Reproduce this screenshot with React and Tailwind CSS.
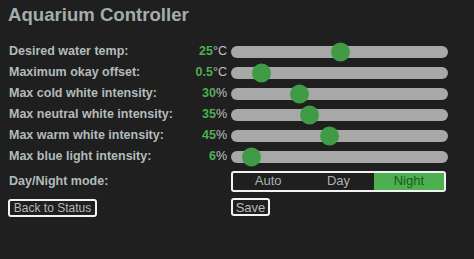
import React from "react";

const rows = [
  { label: "Desired water temp:", num: "25", unit: "°C", x: 340 },
  { label: "Maximum okay offset:", num: "0.5", unit: "°C", x: 261 },
  { label: "Max cold white intensity:", num: "30", unit: "%", x: 299 },
  { label: "Max neutral white intensity:", num: "35", unit: "%", x: 309 },
  { label: "Max warm white intensity:", num: "45", unit: "%", x: 329 },
  { label: "Max blue light intensity:", num: "6", unit: "%", x: 251 },
];

function Slider({ x }) {
  const left = x - 231 - 9.5;
  return (
    <div className="relative w-[217px] h-[12px] rounded-full bg-[#a8a8a8]">
      <div
        className="absolute top-1/2 -translate-y-1/2 w-[19px] h-[19px] rounded-full bg-[#3f9b46]"
        style={{ left: `${left}px` }}
      />
    </div>
  );
}

export default function App() {
  return (
    <div
      className="w-[474px] h-[259px] bg-[#1f1f1f] overflow-hidden"
      style={{ fontFamily: '"Liberation Sans", Arial, sans-serif' }}
    >
      <h1 className="pl-[8px] pt-[4px] text-[18.6px] leading-[22px] font-bold text-[#a3adad]">
        Aquarium Controller
      </h1>
      <div className="pt-[15px] flex flex-col">
        {rows.map((r) => (
          <div key={r.label} className="flex items-center h-[21px]">
            <div className="w-[160px] pl-[9px] text-[12.5px] font-bold text-[#b3bbbb] whitespace-nowrap">
              {r.label}
            </div>
            <div className="w-[67px] text-right text-[12.5px] whitespace-nowrap">
              <span className="font-bold text-[#4caf50]">{r.num}</span>
              <span className="text-[#c2c2c2]">{r.unit}</span>
            </div>
            <div className="ml-[4px]">
              <Slider x={r.x} />
            </div>
          </div>
        ))}
        <div className="flex items-center h-[22px] mt-[3px]">
          <div className="w-[231px] pl-[9px] text-[12.5px] text-[#b3bbbb] font-bold whitespace-nowrap">
            Day/Night mode:
          </div>
          <div className="w-[215px] h-[21px] border-2 border-[#f2f2f2] rounded-[3px] flex text-[13px] overflow-hidden">
            <div className="flex-1 flex items-center justify-center text-[#aab2b2]">Auto</div>
            <div className="flex-1 flex items-center justify-center text-[#aab2b2]">Day</div>
            <div className="flex-1 flex items-center justify-center bg-[#4caf50] text-[#1c5a1e]">Night</div>
          </div>
        </div>
        <div className="flex items-center h-[18px] mt-[6px]">
          <div className="w-[231px] pl-[8px]">
            <button className="h-[18px] w-[89px] border-2 border-[#f2f2f2] rounded-[3px] text-[12px] leading-[12px] text-[#b3bbbb] whitespace-nowrap">
              Back to Status
            </button>
          </div>
          <button className="h-[18px] w-[39px] border-2 border-[#f2f2f2] rounded-[3px] text-[13px] leading-[13px] text-[#b3bbbb]">
            Save
          </button>
        </div>
      </div>
    </div>
  );
}
